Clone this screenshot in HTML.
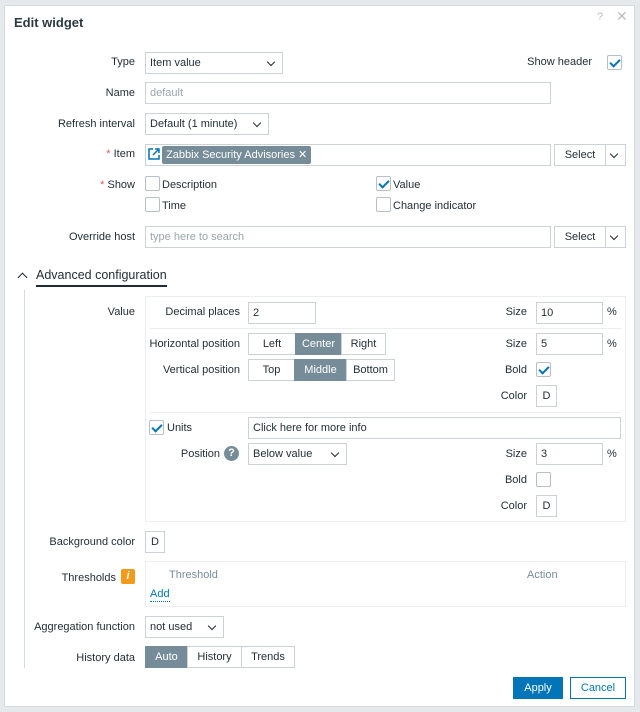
<!DOCTYPE html>
<html><head><style>
*{box-sizing:border-box;margin:0;padding:0}
body{width:640px;height:712px;background:#e6e9eb;font-family:"Liberation Sans",sans-serif;font-size:11px;color:#1f2c33;position:relative;overflow:hidden}
#dlg{position:absolute;left:4px;top:5px;width:631px;height:702px;background:#fff;border:1px solid #d5dadd}
.a{position:absolute;line-height:14px}
.lbl{position:absolute;text-align:right;white-space:nowrap;line-height:14px}
.inp{position:absolute;border:1px solid #cbd1d5;background:#fff;height:22px;line-height:20px;padding-left:4px;white-space:nowrap}
.sel::after{content:"";position:absolute;right:8px;top:6px;width:5px;height:5px;border-right:1.5px solid #1f2c33;border-bottom:1.5px solid #1f2c33;transform:rotate(45deg)}
.cb{position:absolute;width:15px;height:15px;border:1px solid #b7c0c6;border-radius:2px;background:#fff}
.cb.on::after{content:"";position:absolute;left:4px;top:1px;width:4px;height:8px;border-right:2px solid #0275b8;border-bottom:2px solid #0275b8;transform:rotate(45deg)}
.btn{position:absolute;border:1px solid #cbd1d5;background:#fff;height:22px;line-height:20px;text-align:center}
.act{background:#768d99;color:#fff;border-color:#768d99}
.req{color:#e45959}
</style></head><body>
<div id="dlg"></div>
<div class="a" style="left:14px;top:16px;font-size:13px;font-weight:bold;color:#2b3a42">Edit widget</div>
<div class="a" style="left:597px;top:10px;color:#b7c0c6;font-size:11px">?</div>
<div class="a" style="left:616px;top:9px;color:#b7c0c6;font-size:14px">✕</div>

<div class="lbl" style="right:505px;top:55px">Type</div>
<div class="inp sel" style="left:145px;top:52px;width:138px">Item value</div>
<div class="lbl" style="right:48px;top:55px">Show header</div>
<div class="cb on" style="left:607px;top:55px"></div>

<div class="lbl" style="right:505px;top:86px">Name</div>
<div class="inp" style="left:145px;top:82px;width:406px;color:#9aa5ab">default</div>

<div class="lbl" style="right:505px;top:117px">Refresh interval</div>
<div class="inp sel" style="left:145px;top:113px;width:124px">Default (1 minute)</div>

<div class="lbl" style="right:505px;top:147px"><span class="req">*</span> Item</div>
<div class="inp" style="left:145px;top:144px;width:406px"></div>
<svg class="a" style="left:148px;top:148px" width="12" height="12" viewBox="0 0 12 12"><path d="M5 1H1v10h10V7" fill="none" stroke="#0275b8" stroke-width="1.5"/><path d="M7 1h4v4M11 1L5 7" fill="none" stroke="#0275b8" stroke-width="1.5"/></svg>
<div class="a" style="left:162px;top:146px;width:149px;height:18px;background:#768d99;color:#fff;line-height:18px;padding-left:4px;border-radius:2px">Zabbix Security Advisories ✕</div>
<div class="btn" style="left:554px;top:144px;width:52px">Select</div>
<div class="btn sel" style="left:605px;top:144px;width:21px"></div>

<div class="lbl" style="right:505px;top:178px"><span class="req">*</span> Show</div>
<div class="cb" style="left:145px;top:176px"></div><div class="a" style="left:162px;top:178px">Description</div>
<div class="cb on" style="left:376px;top:176px"></div><div class="a" style="left:393px;top:178px">Value</div>
<div class="cb" style="left:145px;top:197px"></div><div class="a" style="left:162px;top:199px">Time</div>
<div class="cb" style="left:376px;top:197px"></div><div class="a" style="left:393px;top:199px">Change indicator</div>

<div class="lbl" style="right:505px;top:230px">Override host</div>
<div class="inp" style="left:145px;top:226px;width:406px;color:#9aa5ab">type here to search</div>
<div class="btn" style="left:554px;top:226px;width:52px">Select</div>
<div class="btn sel" style="left:605px;top:226px;width:21px"></div>

<div class="a" style="left:19px;top:274px;width:7px;height:7px;border-left:1.5px solid #1f2c33;border-top:1.5px solid #1f2c33;transform:rotate(45deg)"></div>
<div class="a" style="left:36px;top:268px;font-size:12.5px;border-bottom:2px solid #1f2c33;padding-bottom:3px">Advanced configuration</div>
<div class="a" style="left:24px;top:290px;width:1px;height:378px;background:#d5dadd"></div>

<div class="lbl" style="right:505px;top:305px">Value</div>
<div class="a" style="left:145px;top:296px;width:481px;height:226px;border:1px solid #ebeef0"></div>
<div class="lbl" style="right:400px;top:305px">Decimal places</div>
<div class="inp" style="left:248px;top:302px;width:68px">2</div>
<div class="lbl" style="right:113px;top:305px">Size</div>
<div class="inp" style="left:536px;top:302px;width:67px">10</div>
<div class="a" style="left:607px;top:305px">%</div>
<div class="a" style="left:150px;top:328px;width:471px;height:1px;background:#ebeef0"></div>

<div class="lbl" style="right:400px;top:337px">Horizontal position</div>
<div class="btn" style="left:248px;top:333px;width:48px">Left</div>
<div class="btn act" style="left:295px;top:333px;width:47px">Center</div>
<div class="btn" style="left:341px;top:333px;width:45px">Right</div>
<div class="lbl" style="right:113px;top:337px">Size</div>
<div class="inp" style="left:536px;top:333px;width:67px">5</div>
<div class="a" style="left:607px;top:337px">%</div>

<div class="lbl" style="right:400px;top:363px">Vertical position</div>
<div class="btn" style="left:248px;top:359px;width:47px">Top</div>
<div class="btn act" style="left:294px;top:359px;width:53px">Middle</div>
<div class="btn" style="left:346px;top:359px;width:49px">Bottom</div>
<div class="lbl" style="right:113px;top:363px">Bold</div>
<div class="cb on" style="left:536px;top:362px"></div>
<div class="lbl" style="right:113px;top:389px">Color</div>
<div class="btn" style="left:536px;top:385px;width:21px">D</div>
<div class="a" style="left:150px;top:412px;width:471px;height:1px;background:#ebeef0"></div>

<div class="cb on" style="left:149px;top:420px"></div>
<div class="a" style="left:167px;top:421px">Units</div>
<div class="inp" style="left:248px;top:417px;width:373px">Click here for more info</div>
<div class="lbl" style="right:420px;top:447px">Position</div>
<div class="a" style="left:224px;top:446px;width:15px;height:15px;border-radius:50%;background:#768d99;color:#fff;text-align:center;line-height:15px;font-size:11px;font-weight:bold">?</div>
<div class="inp sel" style="left:248px;top:443px;width:99px">Below value</div>
<div class="lbl" style="right:113px;top:447px">Size</div>
<div class="inp" style="left:536px;top:443px;width:67px">3</div>
<div class="a" style="left:607px;top:447px">%</div>
<div class="lbl" style="right:113px;top:473px">Bold</div>
<div class="cb" style="left:536px;top:472px"></div>
<div class="lbl" style="right:113px;top:499px">Color</div>
<div class="btn" style="left:536px;top:495px;width:21px">D</div>

<div class="lbl" style="right:505px;top:535px">Background color</div>
<div class="btn" style="left:145px;top:531px;width:20px">D</div>

<div class="lbl" style="right:524px;top:571px">Thresholds</div>
<div class="a" style="left:121px;top:569px;width:14px;height:15px;background:#f29a1a;color:#fff;text-align:center;line-height:15px;font-style:italic;font-weight:bold;border-radius:2px">i</div>
<div class="a" style="left:145px;top:561px;width:481px;height:46px;border:1px solid #ebeef0"></div>
<div class="a" style="left:169px;top:568px;color:#768d99">Threshold</div>
<div class="a" style="left:527px;top:568px;color:#768d99">Action</div>
<div class="a" style="left:150px;top:587px;color:#0275b8;border-bottom:1px dotted #0275b8">Add</div>

<div class="lbl" style="right:505px;top:620px">Aggregation function</div>
<div class="inp sel" style="left:145px;top:616px;width:79px">not used</div>

<div class="lbl" style="right:505px;top:651px">History data</div>
<div class="btn act" style="left:145px;top:646px;width:43px">Auto</div>
<div class="btn" style="left:187px;top:646px;width:55px">History</div>
<div class="btn" style="left:241px;top:646px;width:54px">Trends</div>

<div class="btn" style="left:513px;top:677px;width:50px;background:#0275b8;color:#fff;border-color:#0275b8">Apply</div>
<div class="btn" style="left:570px;top:677px;width:56px;border-color:#0275b8;color:#0275b8">Cancel</div>
</body></html>
